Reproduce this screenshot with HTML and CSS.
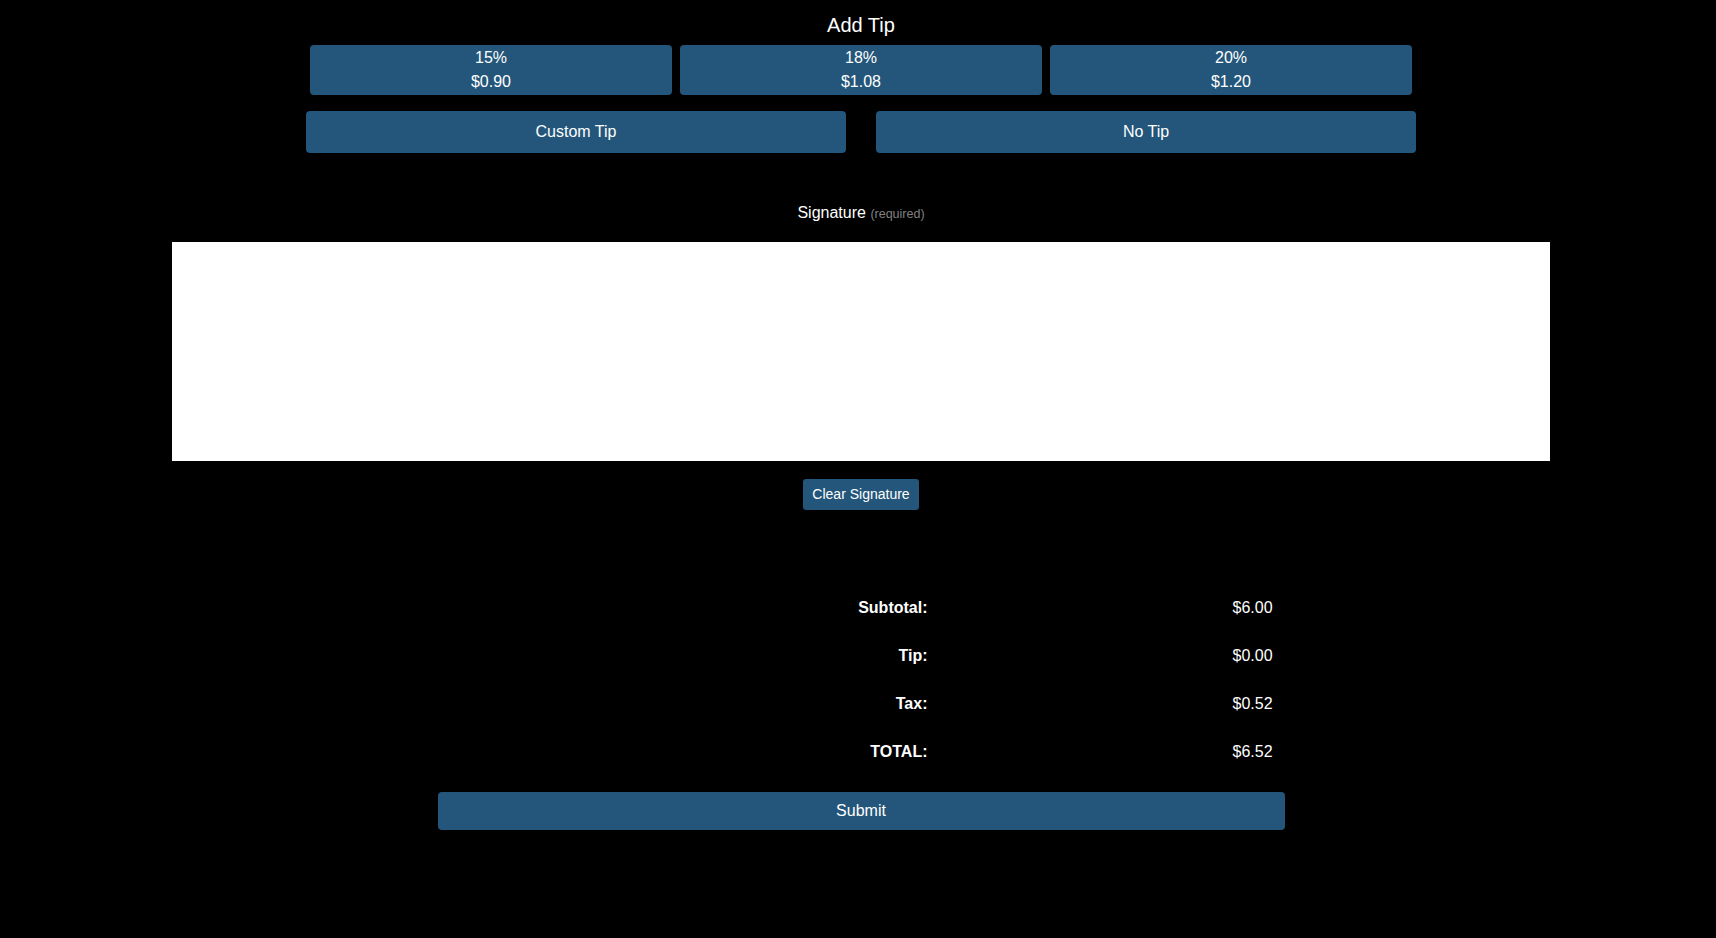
FILE: index.html
```html
<!DOCTYPE html>
<html lang="en">
<head>
<meta charset="utf-8">
<title>Add Tip</title>
<link rel="stylesheet" href="styles.css">
</head>
<body>
<div class="page">
  <h2 class="title">Add Tip</h2>
  <div class="tips">
    <div class="tip-row">
      <button class="btn tip-btn"><span>15%</span><span>$0.90</span></button>
      <button class="btn tip-btn"><span>18%</span><span>$1.08</span></button>
      <button class="btn tip-btn"><span>20%</span><span>$1.20</span></button>
    </div>
    <div class="alt-row">
      <button class="btn alt-btn">Custom Tip</button>
      <button class="btn alt-btn">No Tip</button>
    </div>
  </div>

  <div class="sig-label">Signature <span class="req">(required)</span></div>
  <div class="sig-pad"></div>
  <div class="clear-wrap"><button class="btn clear-btn">Clear Signature</button></div>

  <div class="summary">
    <div class="lbl">Subtotal:</div><div class="val">$6.00</div>
    <div class="lbl">Tip:</div><div class="val">$0.00</div>
    <div class="lbl">Tax:</div><div class="val">$0.52</div>
    <div class="lbl">TOTAL:</div><div class="val">$6.52</div>
  </div>
  <button class="btn submit-btn">Submit</button>
</div>
</body>
</html>
```

FILE: styles.css
```css
html, body {
  margin: 0;
  padding: 0;
  background: #000;
}
body {
  font-family: "Liberation Sans", Arial, sans-serif;
  color: #fff;
}
.page {
  padding: 14px 0 0 6px;
  display: flex;
  flex-direction: column;
  align-items: center;
}
.title {
  margin: 0;
  font-size: 20px;
  font-weight: normal;
  line-height: 23px;
  height: 23px;
}
.btn {
  font-family: "Liberation Sans", Arial, sans-serif;
  background: #23567a;
  color: #fff;
  border: none;
  border-radius: 4px;
  cursor: pointer;
  font-size: 16px;
  padding: 0;
}
.tips {
  width: 1110px;
  margin-top: 8px;
}
.tip-row {
  display: flex;
}
.tip-btn {
  flex: 1 1 0;
  margin: 0 4px;
  height: 50px;
  display: flex;
  flex-direction: column;
  align-items: center;
  justify-content: center;
  line-height: 24px;
}
.alt-row {
  display: flex;
  gap: 30px;
  margin-top: 16px;
}
.alt-btn {
  flex: 1 1 0;
  height: 42px;
  line-height: 18px;
}
.sig-label {
  margin-top: 50px;
  font-size: 16px;
  line-height: 19px;
}
.req {
  font-size: 12.5px;
  color: #808080;
}
.sig-pad {
  margin-top: 18px;
  width: 1378px;
  height: 219px;
  background: #fff;
}
.clear-wrap {
  margin-top: 18px;
}
.clear-btn {
  font-size: 14px;
  line-height: 17px;
  padding: 7px 9px;
  border-radius: 3px;
}
.summary {
  margin-top: 74px;
  width: 847px;
  display: grid;
  grid-template-columns: 490px 1fr;
  column-gap: 305px;
  grid-auto-rows: 48px;
  align-items: center;
  font-size: 16px;
}
.lbl {
  text-align: right;
  font-weight: bold;
}
.submit-btn {
  margin-top: 16px;
  width: 847px;
  height: 38px;
  line-height: 18px;
}
```
